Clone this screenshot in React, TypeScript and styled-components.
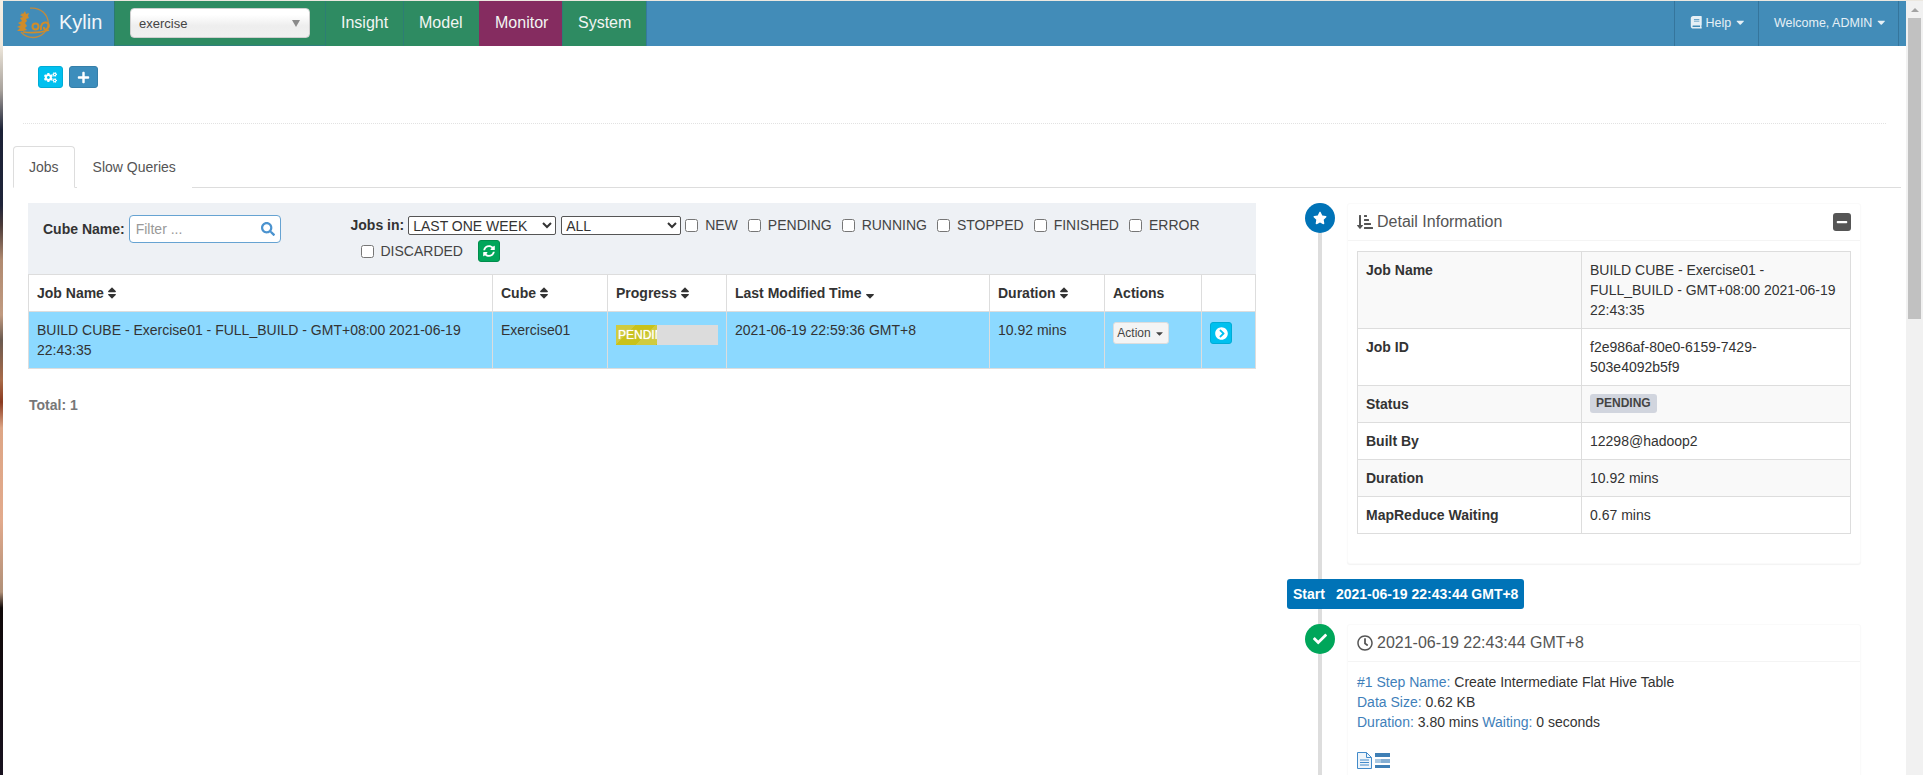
import React from "react";
import styled, { createGlobalStyle } from "styled-components";
import {
  FaBook, FaCaretDown, FaCheck, FaChevronCircleRight, FaCogs, FaMinus, FaPlus, FaRegClock,
  FaSearch, FaSort, FaSortAmountDownAlt, FaSortDown, FaStar, FaSyncAlt,
} from "react-icons/fa";

const Global = createGlobalStyle`
  html, body { margin: 0; padding: 0; height: 775px; overflow: hidden; background: #fff; }
  body { font-family: "Liberation Sans", Arial, sans-serif; font-size: 14px; color: #333; }
  * { box-sizing: border-box; }
`;

const Shell = styled.div`
  display: flex; width: 1923px; height: 775px; overflow: hidden; padding-top: 1px; background: #ece8e0;
`;
const Wallpaper = styled.div`
  flex: 0 0 3px; margin-top: -1px;
  background: linear-gradient(180deg, #f5efe5 0, #efe8dc 45px, #a8a29c 90px, #1b2136 130px, #1f2439 205px,
    #4a3a38 225px, #b08a70 260px, #c09a80 315px, #6a5a50 340px, #a86a48 380px, #8a3a20 402px, #dda585 428px,
    #e2aa8c 520px, #b09078 592px, #0f0808 608px, #18121f 775px);
`;
const Main = styled.div`flex: 0 0 1903px; height: 774px; background: #fff; overflow: hidden;`;
const Scrollbar = styled.div`
  flex: 0 0 17px; background: #f1f1f1; display: flex; flex-direction: column; align-items: center;
`;
const ScrollUp = styled.div`
  height: 17px; width: 100%; display: flex; align-items: center; justify-content: center;
  &::before { content: ""; border: 4px solid transparent; border-top: 0; border-bottom: 4px solid #a3a3a3; }
`;
const ScrollThumb = styled.div`width: 13px; height: 301px; background: #c1c1c1;`;

const Nav = styled.nav`display: flex; height: 45px; background: #428cb8; color: #fff;`;
const Brand = styled.div`
  flex: 0 0 111px; display: flex; align-items: center; gap: 8px; padding: 0 0 2px 12px; font-size: 20px; color: #f2f7fa;
`;
const ProjectCell = styled.div`
  flex: 0 0 211px; background: #2e8b62; padding: 7px 15px 0 15px; border-left: 1px solid #2a7a70; border-bottom: 1px solid #2f7f7c;
`;
const ProjectSelect = styled.div`
  height: 30px; display: flex; align-items: center; justify-content: space-between; padding: 0 9px 0 8px;
  background: linear-gradient(#fff 20%, #eee 60%, #f0f0f0); border: 1px solid #cfcfcf; border-radius: 4px;
  font-size: 13px; color: #444;
  &::after { content: ""; border: 4px solid transparent; border-top: 7px solid #8a8a8a; border-bottom: 0; }
`;
const NavTab = styled.div<{ $active?: boolean; $w: number }>`
  flex: 0 0 ${(p) => p.$w}px; display: flex; align-items: center; padding: 0 0 2px 15px; font-size: 16px;
  background: ${(p) => (p.$active ? "#852c60" : "#2e8b62")}; color: #f2f5f3;
  border-left: 1px solid ${(p) => (p.$active ? "#852c60" : "#2d7e74")};
`;
const NavSpacer = styled.div`flex: 1; border-left: 1px solid #357a9e;`;
const NavRight = styled.div<{ $w: number }>`
  flex: 0 0 ${(p) => p.$w}px; display: flex; align-items: center; padding: 0 0 2px 15px; gap: 3px; font-size: 12.5px;
  color: #e6f0f6; border-left: 1px solid #35759c;
`;
const NavEnd = styled.div`flex: 0 0 8px; border-left: 1px solid #35759c;`;

const Toolbar = styled.div`display: flex; gap: 6px; padding: 20px 0 35px 35px;`;
const IconButton = styled.button<{ $bg: string; $border: string; $w: number }>`
  width: ${(p) => p.$w}px; height: 22px; padding: 0; display: inline-flex; align-items: center; justify-content: center;
  background: ${(p) => p.$bg}; border: 1px solid ${(p) => p.$border}; border-radius: 3px; color: #fff; font-size: 13px;
`;
const Divider = styled.div`margin: 0 20px; border-top: 1px dotted #e2e2e2;`;

const Tabs = styled.div`
  display: flex; gap: 2px; margin: 22px 5px 0 10px; height: 42px; border-bottom: 1px solid #ddd;
`;
const Tab = styled.div<{ $active?: boolean }>`
  height: 42px; padding: 0 15px; display: flex; align-items: center; color: #555; border-radius: 4px 4px 0 0;
  border: 1px solid ${(p) => (p.$active ? "#ddd" : "transparent")};
  border-bottom-color: ${(p) => (p.$active ? "#fff" : "transparent")};
  background: #fff;
`;

const Content = styled.div`display: flex; padding: 15px 0 0 25px;`;
const LeftColumn = styled.div`flex: 0 0 1228px;`;
const FilterPanel = styled.div`
  height: 71px; background: #eef1f5; display: flex; padding: 12px 0 0 15px;
`;
const CubeField = styled.div`display: flex; align-items: flex-start; gap: 4px; width: 307.5px;`;
const FieldLabel = styled.label`font-weight: bold; line-height: 28px;`;
const InputWrap = styled.div`
  width: 152px; height: 28px; display: flex; align-items: center; justify-content: space-between;
  padding: 0 5px 0 6px; background: #fff; border: 1px solid #66a3d2; border-radius: 4px; color: #999;
  svg { color: #4b93cf; font-size: 14px; }
`;
const JobsFilter = styled.div`display: flex; flex-direction: column; gap: 5px;`;
const FilterRow = styled.div<{ $indent?: number }>`
  display: flex; align-items: center; height: 20px; padding-left: ${(p) => p.$indent ?? 0}px;
`;
const DiscardedRow = styled(FilterRow)`height: 22px;`;
const JobsLabel = styled.label`font-weight: bold; margin-right: 4px; color: #333;`;
const NativeSelect = styled.select<{ $w: number; $after: number }>`
  width: ${(p) => p.$w}px; height: 19px; margin: 0 ${(p) => p.$after}px 0 0; padding: 0; background: #fff; color: #333;
  border: 1px solid #555; border-radius: 2px; font: 14px "Liberation Sans", Arial, sans-serif;
`;
const Check = styled.label`display: inline-flex; align-items: center; gap: 7px; margin-right: 10px; color: #444;`;
const CheckBox = styled.input.attrs({ type: "checkbox" })`width: 13px; height: 13px; margin: 0;`;
const RefreshButton = styled(IconButton)`margin-left: 5px; font-size: 12px;`;

const JobsTable = styled.table`
  width: 1227px; table-layout: fixed; border-collapse: collapse; line-height: 20px;
  th, td { border: 1px solid #ddd; padding: 8px; vertical-align: top; text-align: left; }
  th { height: 36px; font-weight: bold; background: #fff; color: #333; }
  td { height: 57px; background: #8cd9ff; color: #333; }
`;
const SortIcon = styled.span`margin-left: 1px; font-size: 14px; color: #333; svg { vertical-align: -2px; }`;
const Progress = styled.div`width: 102px; height: 20px; margin-top: 5px; background: #dcdcdc; overflow: hidden;`;
const ProgressFill = styled.div`
  height: 100%; overflow: hidden; white-space: nowrap; color: #fff; font-size: 12px; line-height: 20px; padding-left: 2px;
  text-shadow: 0 0 1px rgba(255, 255, 255, 0.8);
  background: linear-gradient(135deg, #d0cb3f 0 25%, #c9c21a 25% 50%, #d0cb3f 50% 75%, #c9c21a 75%);
  background-size: 40px 40px;
`;
const ActionButton = styled.button`
  margin-top: 2px; width: 56px; height: 22px; padding: 0; display: inline-flex; align-items: center; justify-content: center; gap: 3px;
  background: #f4f4f4; border: 1px solid #ddd; border-radius: 3px; color: #444; font: 12px "Liberation Sans", Arial, sans-serif;
  svg { font-size: 11px; }
`;
const NextButton = styled(IconButton)`margin-top: 2px;`;
const Total = styled.div`margin-top: 26px; padding-left: 1px; font-weight: bold; color: #777; line-height: 20px;`;

const Timeline = styled.div`
  position: relative; flex: 0 0 574px; margin-left: 31px; display: flex; flex-direction: column; gap: 15px;
  &::before { content: ""; position: absolute; left: 31px; top: 0; bottom: -300px; width: 4px; background: #ddd; }
`;
const Item = styled.div`position: relative; display: flex; padding-left: 60px;`;
const Badge = styled.div<{ $bg: string }>`
  position: absolute; left: 18px; top: 0; width: 30px; height: 30px; border-radius: 50%;
  display: flex; align-items: center; justify-content: center; background: ${(p) => p.$bg}; color: #fff; font-size: 14px;
`;
const Panel = styled.div`
  width: 514px; background: #fff; border: 1px solid #fafafa; border-radius: 3px; box-shadow: 0 1px 1px rgba(0, 0, 0, 0.05);
`;
const PanelHeader = styled.div`
  height: 37px; display: flex; align-items: center; gap: 4px; padding: 0 9px; font-size: 16px; color: #555;
  border-bottom: 1px solid #f4f4f4;
  svg { flex: none; font-size: 16px; }
`;
const Collapse = styled.button`
  margin-left: auto; width: 18px; height: 18px; padding: 0; display: flex; align-items: center; justify-content: center;
  background: #555; color: #fff; border: 0; border-radius: 3px; font-size: 12px;
  svg { font-size: 12px; }
`;
const PanelBody = styled.div<{ $bottom: number }>`padding: 10px 9px ${(p) => p.$bottom}px;`;
const DetailTable = styled.table`
  width: 494px; table-layout: fixed; border-collapse: collapse; line-height: 20px;
  td { border: 1px solid #ddd; padding: 8px; vertical-align: top; color: #333; }
  td:first-child { width: 224px; font-weight: bold; }
  tr:nth-child(odd) td { background: #f9f9f9; }
`;
const StatusBadge = styled.span`
  display: inline-block; padding: 0 6px; height: 19px; line-height: 19px; vertical-align: top;
  background: #d1d5de; color: #444; border-radius: 3px; font-size: 12px; font-weight: bold;
`;
const TimeLabel = styled.div`
  position: relative; z-index: 1; align-self: flex-start; height: 30px; padding: 0 6px; display: flex; align-items: center; gap: 11px;
  background: #0073b7; color: #fff; border-radius: 3px; font-weight: bold;
`;
const Step = styled.div`line-height: 20px; color: #333;`;
const StepKey = styled.span`color: #3f7fba;`;
const StepIcons = styled.div`display: flex; gap: 3px; margin-top: 20px;`;

const Logo = () => (
  <svg width="36" height="32" viewBox="0 0 36 32" fill="none" aria-hidden="true">
    <path d="M15 1.2C25 0 33 7 33.2 16C33.4 24 26 30.5 18 30.5C13 30.5 9 28.5 6 25" stroke="#c08a3e" strokeWidth="1.3" />
    <path d="M6 5l2 2 2-3 1 3 3-1-1 3 1 2-3 1 1 2-2 2 2 3-2 2 2 2-4 1H2l3-3-3-1 4-2-3-2 4-2-2-3 3-1-3-2 2-1z" fill="#d08c2a" />
    <circle cx="20.5" cy="19.5" r="3" stroke="#d08c2a" strokeWidth="2" />
    <path d="M26 23c-1-5 2-8 5-7.500s4 4 1.500 6-4 .5-3.500-1.500" stroke="#d08c2a" strokeWidth="2" />
    <path d="M8 25c7 1 17 1 26-2" stroke="#d08c2a" strokeWidth="1.600" />
  </svg>
);

const DocIcon = () => (
  <svg width="15" height="17" viewBox="0 0 15 17" fill="none" aria-hidden="true">
    <path d="M.5.5h9l5 5v11H.500z" fill="#eef5fb" stroke="#428bca" />
    <path d="M9.500.5v5h5M3 8h9M3 10.500h9M3 13h9" stroke="#428bca" />
  </svg>
);
const ListIcon = () => (
  <svg width="15" height="17" viewBox="0 0 15 17" aria-hidden="true">
    <path d="M0 1h15v4H0z" fill="#3f7fb5" />
    <path d="M0 7h15v4H0z" fill="#a9c8e2" />
    <path d="M6 7h9v4H6z" fill="#3f7fb5" opacity=".35" />
    <path d="M0 13h15v3H0z" fill="#3f7fb5" />
  </svg>
);

const Sort = () => <SortIcon><FaSort /></SortIcon>;
const SLabel = ({ children }: { children: string }) => (
  <Check><CheckBox />{children}</Check>
);

export default function App() {
  return (
    <>
      <Global />
      <Shell>
        <Wallpaper />
        <Main>
          <Nav>
            <Brand><Logo />Kylin</Brand>
            <ProjectCell><ProjectSelect>exercise</ProjectSelect></ProjectCell>
            <NavTab $w={78}>Insight</NavTab>
            <NavTab $w={76}>Model</NavTab>
            <NavTab $w={83} $active>Monitor</NavTab>
            <NavTab $w={84}>System</NavTab>
            <NavSpacer />
            <NavRight $w={84}><FaBook />Help<FaCaretDown /></NavRight>
            <NavRight $w={140}>Welcome, ADMIN<FaCaretDown /></NavRight>
            <NavEnd />
          </Nav>
          <Toolbar>
            <IconButton $w={25} $bg="#00c0ef" $border="#00acd6"><FaCogs /></IconButton>
            <IconButton $w={29} $bg="#3c8dbc" $border="#367fa9"><FaPlus /></IconButton>
          </Toolbar>
          <Divider />
          <Tabs>
            <Tab $active>Jobs</Tab>
            <Tab>Slow Queries</Tab>
          </Tabs>
          <Content>
            <LeftColumn>
              <FilterPanel>
                <CubeField>
                  <FieldLabel>Cube Name:</FieldLabel>
                  <InputWrap>Filter ...<FaSearch /></InputWrap>
                </CubeField>
                <JobsFilter>
                  <FilterRow>
                    <JobsLabel>Jobs in:</JobsLabel>
                    <NativeSelect $w={148} $after={5} defaultValue="w"><option value="w">LAST ONE WEEK</option></NativeSelect>
                    <NativeSelect $w={120} $after={4} defaultValue="a"><option value="a">ALL</option></NativeSelect>
                    <SLabel>NEW</SLabel>
                    <SLabel>PENDING</SLabel>
                    <SLabel>RUNNING</SLabel>
                    <SLabel>STOPPED</SLabel>
                    <SLabel>FINISHED</SLabel>
                    <SLabel>ERROR</SLabel>
                  </FilterRow>
                  <DiscardedRow $indent={10}>
                    <SLabel>DISCARDED</SLabel>
                    <RefreshButton $w={22} $bg="#00a65a" $border="#008d4c"><FaSyncAlt /></RefreshButton>
                  </DiscardedRow>
                </JobsFilter>
              </FilterPanel>
              <JobsTable>
                <colgroup>
                  <col style={{ width: 464 }} /><col style={{ width: 115 }} /><col style={{ width: 119 }} />
                  <col style={{ width: 263 }} /><col style={{ width: 115 }} /><col style={{ width: 97 }} /><col style={{ width: 54 }} />
                </colgroup>
                <thead>
                  <tr>
                    <th>Job Name<Sort /></th>
                    <th>Cube<Sort /></th>
                    <th>Progress<Sort /></th>
                    <th>Last Modified Time<SortIcon><FaSortDown /></SortIcon></th>
                    <th>Duration<Sort /></th>
                    <th>Actions</th>
                    <th />
                  </tr>
                </thead>
                <tbody>
                  <tr>
                    <td>BUILD CUBE - Exercise01 - FULL_BUILD - GMT+08:00 2021-06-19 22:43:35</td>
                    <td>Exercise01</td>
                    <td><Progress><ProgressFill style={{ width: "40%" }}>PENDING</ProgressFill></Progress></td>
                    <td>2021-06-19 22:59:36 GMT+8</td>
                    <td>10.92 mins</td>
                    <td><ActionButton>Action<FaCaretDown /></ActionButton></td>
                    <td><NextButton $w={22} $bg="#00c0ef" $border="#00acd6"><FaChevronCircleRight /></NextButton></td>
                  </tr>
                </tbody>
              </JobsTable>
              <Total>Total: 1</Total>
            </LeftColumn>
            <Timeline>
              <Item>
                <Badge $bg="#0073b7"><FaStar /></Badge>
                <Panel>
                  <PanelHeader>
                    <FaSortAmountDownAlt />Detail Information
                    <Collapse><FaMinus /></Collapse>
                  </PanelHeader>
                  <PanelBody $bottom={29}>
                    <DetailTable>
                      <tbody>
                        <tr><td>Job Name</td><td>BUILD CUBE - Exercise01 - FULL_BUILD - GMT+08:00 2021-06-19 22:43:35</td></tr>
                        <tr><td>Job ID</td><td>f2e986af-80e0-6159-7429-503e4092b5f9</td></tr>
                        <tr><td>Status</td><td><StatusBadge>PENDING</StatusBadge></td></tr>
                        <tr><td>Built By</td><td>12298@hadoop2</td></tr>
                        <tr><td>Duration</td><td>10.92 mins</td></tr>
                        <tr><td>MapReduce Waiting</td><td>0.67 mins</td></tr>
                      </tbody>
                    </DetailTable>
                  </PanelBody>
                </Panel>
              </Item>
              <TimeLabel><span>Start</span><span>2021-06-19 22:43:44 GMT+8</span></TimeLabel>
              <Item>
                <Badge $bg="#00a65a"><FaCheck /></Badge>
                <Panel>
                  <PanelHeader><FaRegClock />2021-06-19 22:43:44 GMT+8</PanelHeader>
                  <PanelBody $bottom={20}>
                    <Step><StepKey>#1 Step Name:</StepKey> Create Intermediate Flat Hive Table</Step>
                    <Step><StepKey>Data Size:</StepKey> 0.62 KB</Step>
                    <Step><StepKey>Duration:</StepKey> 3.80 mins <StepKey>Waiting:</StepKey> 0 seconds</Step>
                    <StepIcons><DocIcon /><ListIcon /></StepIcons>
                  </PanelBody>
                </Panel>
              </Item>
            </Timeline>
          </Content>
        </Main>
        <Scrollbar>
          <ScrollUp />
          <ScrollThumb />
        </Scrollbar>
      </Shell>
    </>
  );
}
